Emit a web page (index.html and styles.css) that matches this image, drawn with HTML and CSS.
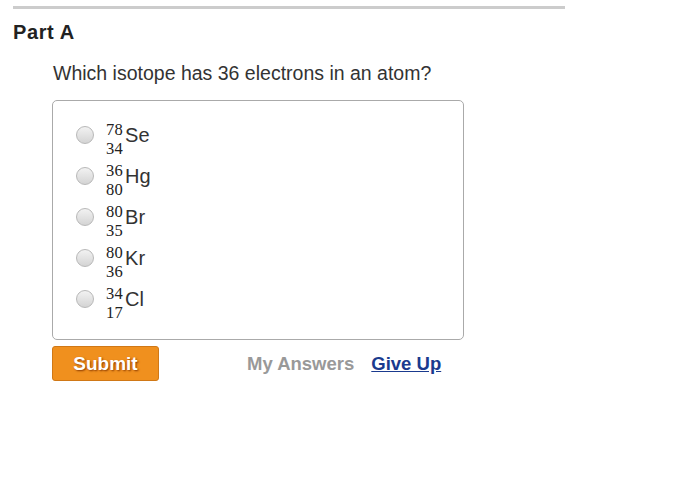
FILE: index.html
```html
<!DOCTYPE html>
<html><head>
<link rel="stylesheet" href="styles.css">
</head>
<body>

<div class="rule"></div>
<h2 class="part-title">Part A</h2>

<div class="problem">
  <p class="question">Which isotope has 36 electrons in an atom?</p>

  <div class="choices">
    <label class="choice">
      <span class="radio"></span>
      <span class="iso"><span>78</span><span>34</span></span><span class="sym">Se</span>
    </label>
    <label class="choice">
      <span class="radio"></span>
      <span class="iso"><span>36</span><span>80</span></span><span class="sym">Hg</span>
    </label>
    <label class="choice">
      <span class="radio"></span>
      <span class="iso"><span>80</span><span>35</span></span><span class="sym">Br</span>
    </label>
    <label class="choice">
      <span class="radio"></span>
      <span class="iso"><span>80</span><span>36</span></span><span class="sym">Kr</span>
    </label>
    <label class="choice">
      <span class="radio"></span>
      <span class="iso"><span>34</span><span>17</span></span><span class="sym">Cl</span>
    </label>
  </div>

  <div class="actions">
    <button class="submit">Submit</button>
    <span class="my-answers">My Answers</span>
    <a class="give-up" href="#">Give Up</a>
  </div>
</div>

</body>
</html>
```

FILE: styles.css
```css
/* page */
body {
  margin: 0;
  font-family: Arial, "Liberation Sans", sans-serif;
  color: #333;
  background: #fff;
}

.rule {
  margin: 6px 0 0 13px;
  width: 552px;
  height: 3px;
  background-color: #ccc;
}

.part-title {
  margin: 11px 0 0 13px;
  font-size: 20px;
  line-height: 24px;
  letter-spacing: 0.6px;
  font-weight: bold;
  color: #222;
}

.problem {
  margin-left: 52px;
}

.question {
  margin: 17px 0 0 1px;
  font-size: 19.5px;
  line-height: 24px;
}

/* answer box */
.choices {
  margin-top: 15px;
  width: 412px;
  height: 240px;
  border: 1px solid #aaa;
  border-radius: 5px;
  padding: 19px 0 0 23px;
  box-sizing: border-box;
  display: flex;
  flex-direction: column;
  gap: 11px;
}

.choice {
  display: flex;
  align-items: center;
  height: 30px;
}

.radio {
  width: 16px;
  height: 16px;
  border: 1px solid #b8b8b8;
  border-radius: 50%;
  background: linear-gradient(#f2f2f2, #d4d4d4);
  margin-right: 12px;
}

.iso {
  display: inline-flex;
  flex-direction: column;
  font-family: "Liberation Serif", serif;
  font-size: 16.5px;
  line-height: 19px;
  letter-spacing: 0.3px;
  color: #222;
  margin-top: 7px;
}

.sym {
  font-size: 20px;
  margin-left: 2px;
}

/* buttons row */
.actions {
  margin-top: 6px;
  display: flex;
  align-items: center;
}

.submit {
  width: 107px;
  height: 35px;
  background-color: #f0901e;
  border: 1px solid #d07816;
  border-radius: 3px;
  color: #fff;
  font-family: Arial, "Liberation Sans", sans-serif;
  font-size: 19px;
  font-weight: bold;
  text-shadow: 1px 1px 2px #8a3a00;
  padding: 0;
  cursor: pointer;
}

.my-answers {
  margin-left: 88px;
  font-size: 18.5px;
  font-weight: bold;
  color: #999;
}

.give-up {
  margin-left: 17px;
  font-size: 18.5px;
  font-weight: bold;
  color: #1a3a8e;
}
```
